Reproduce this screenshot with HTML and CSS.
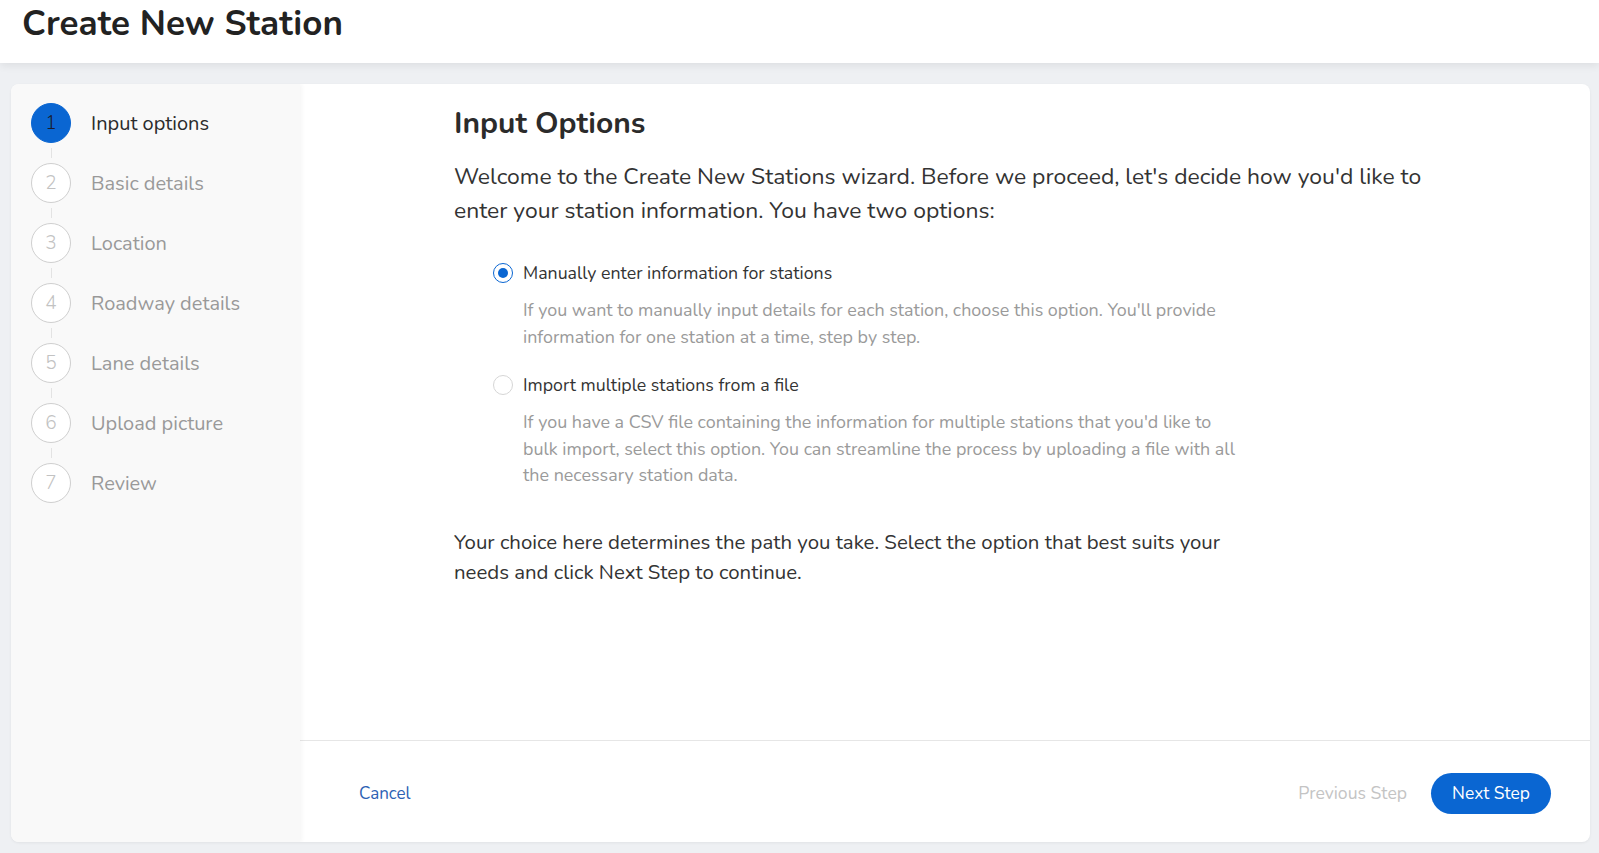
FILE: index.html
```html
<!DOCTYPE html>
<html lang="en">
<head>
<meta charset="utf-8">
<title>Create New Station</title>
<link rel="stylesheet" href="styles.css">
</head>
<body>
<header class="page-header">
  <h1 class="page-title">Create New Station</h1>
</header>
<main class="page-body">
  <section class="wizard">
    <nav class="steps">
      <ol class="step-list">
        <li class="step active"><span class="step-num">1</span><span class="step-label">Input options</span></li>
        <li class="step"><span class="step-num">2</span><span class="step-label">Basic details</span></li>
        <li class="step"><span class="step-num">3</span><span class="step-label">Location</span></li>
        <li class="step"><span class="step-num">4</span><span class="step-label">Roadway details</span></li>
        <li class="step"><span class="step-num">5</span><span class="step-label">Lane details</span></li>
        <li class="step"><span class="step-num">6</span><span class="step-label">Upload picture</span></li>
        <li class="step last"><span class="step-num">7</span><span class="step-label">Review</span></li>
      </ol>
    </nav>
    <div class="panel">
      <div class="panel-content">
        <div class="content-inner">
          <h2 class="section-title">Input Options</h2>
          <p class="intro">Welcome to the Create New Stations wizard. Before we proceed, let's decide how you'd like to enter your station information. You have two options:</p>
          <div class="options">
            <label class="option">
              <span class="option-head"><span class="radio checked"></span><span class="option-label">Manually enter information for stations</span></span>
              <span class="option-desc">If you want to manually input details for each station, choose this option. You'll provide information for one station at a time, step by step.</span>
            </label>
            <label class="option">
              <span class="option-head"><span class="radio"></span><span class="option-label">Import multiple stations from a file</span></span>
              <span class="option-desc">If you have a CSV file containing the information for multiple stations that you'd like to bulk import, select this option. You can streamline the process by uploading a file with all the necessary station data.</span>
            </label>
          </div>
          <p class="outro">Your choice here determines the path you take. Select the option that best suits your needs and click Next Step to continue.</p>
        </div>
      </div>
      <footer class="panel-footer">
        <button class="btn-link">Cancel</button>
        <div class="footer-right">
          <button class="btn-prev">Previous Step</button>
          <button class="btn-next">Next Step</button>
        </div>
      </footer>
    </div>
  </section>
</main>
</body>
</html>
```

FILE: styles.css
```css
* { box-sizing: border-box; }
html, body { height: 100%; }
body {
  margin: 0;
  background: #eef0f3;
  font-family: "Nunito", "Nunito Sans", "Lato", "Open Sans", sans-serif;
  color: #2b2b2b;
  display: flex;
  flex-direction: column;
}
.page-header {
  height: 63px;
  background: #fff;
  padding-left: 22px;
  display: flex;
  align-items: center;
  box-shadow: 0 3px 8px rgba(0,0,0,0.07);
  position: relative;
  z-index: 1;
}
.page-title {
  margin: 0;
  margin-top: -16px;
  font-size: 35px;
  font-weight: 700;
  color: #222;
  letter-spacing: 0.1px;
}
.page-body {
  flex: 1;
  padding: 21px 9px 11px 11px;
  display: flex;
}
.wizard {
  flex: 1;
  display: flex;
  background: #fff;
  border-radius: 8px;
  overflow: hidden;
  box-shadow: 0 1px 3px rgba(0,0,0,0.06);
}
.steps {
  width: 289px;
  background: #f9f9f9;
  box-shadow: 2px 0 4px rgba(0,0,0,0.04);
  padding: 19px 0 0 20px;
  position: relative;
  z-index: 1;
}
.step-list {
  list-style: none;
  margin: 0;
  padding: 0;
  display: flex;
  flex-direction: column;
  gap: 20px;
}
.step {
  display: flex;
  align-items: center;
  height: 40px;
  position: relative;
}
.step::after {
  content: "";
  position: absolute;
  left: 20px;
  top: 45px;
  width: 1px;
  height: 10px;
  background: #e3e3e3;
}
.step.last::after { display: none; }
.step-num {
  width: 40px;
  height: 40px;
  border-radius: 50%;
  border: 1px solid #cfcfcf;
  background: #fff;
  color: #c2c2c2;
  display: flex;
  align-items: center;
  justify-content: center;
  font-size: 19px;
  font-weight: 300;
  flex: none;
}
.step.active .step-num {
  background: #0a66d2;
  border-color: #0a66d2;
  color: #1b1b2b;
}
.step-label {
  margin-left: 20px;
  font-size: 20px;
  color: #999;
}
.step.active .step-label { color: #2b2b2b; }

.panel {
  flex: 1;
  display: flex;
  flex-direction: column;
}
.panel-content {
  flex: 1;
  padding: 22px 0 0 0;
}
.content-inner {
  max-width: 982px;
  margin: 0 auto;
}
.section-title {
  margin: 0;
  font-size: 30px;
  font-weight: 700;
  color: #2b2b2b;
  line-height: 36px;
}
.intro {
  margin: 18px 0 0 0;
  font-size: 22.9px;
  line-height: 34px;
  color: #333;
}
.options {
  margin: 33px 0 0 69px;
  display: flex;
  flex-direction: column;
  gap: 23px;
}
.option {
  display: flex;
  flex-direction: column;
}
.option-head {
  display: flex;
  align-items: center;
  height: 24px;
  position: relative;
}
.radio {
  position: absolute;
  left: -30px;
  top: 2px;
  width: 20px;
  height: 20px;
  border-radius: 50%;
  border: 1px solid #d6d6d6;
  background: #fff;
}
.radio.checked {
  border: 1.5px solid #0a66d2;
}
.radio.checked::after {
  content: "";
  position: absolute;
  left: 3.5px;
  top: 3.5px;
  width: 10px;
  height: 10px;
  border-radius: 50%;
  background: #0a66d2;
}
.option-label {
  font-size: 17.75px;
  color: #333;
}
.option-desc {
  margin-top: 12px;
  max-width: 722px;
  font-size: 17.9px;
  line-height: 26.5px;
  color: #9a9a9a;
}
.outro {
  margin: 38px 0 0 0;
  max-width: 790px;
  font-size: 20.4px;
  line-height: 30px;
  color: #333;
}
.panel-footer {
  height: 102px;
  border-top: 1px solid #e6e6e6;
  display: flex;
  align-items: center;
  justify-content: space-between;
  padding: 3px 39px 0 44px;
}
button {
  font-family: inherit;
  border: none;
  background: none;
  cursor: pointer;
}
.btn-link {
  color: #2d62b4;
  font-size: 17px;
  padding: 8px 15px;
}
.footer-right {
  display: flex;
  align-items: center;
  gap: 8px;
}
.btn-prev {
  color: #c4c4c4;
  font-size: 17.6px;
  padding: 8px 16px;
}
.btn-next {
  background: #0a66d2;
  color: #fff;
  font-size: 17.4px;
  height: 41px;
  width: 120px;
  border-radius: 21px;
}
```
